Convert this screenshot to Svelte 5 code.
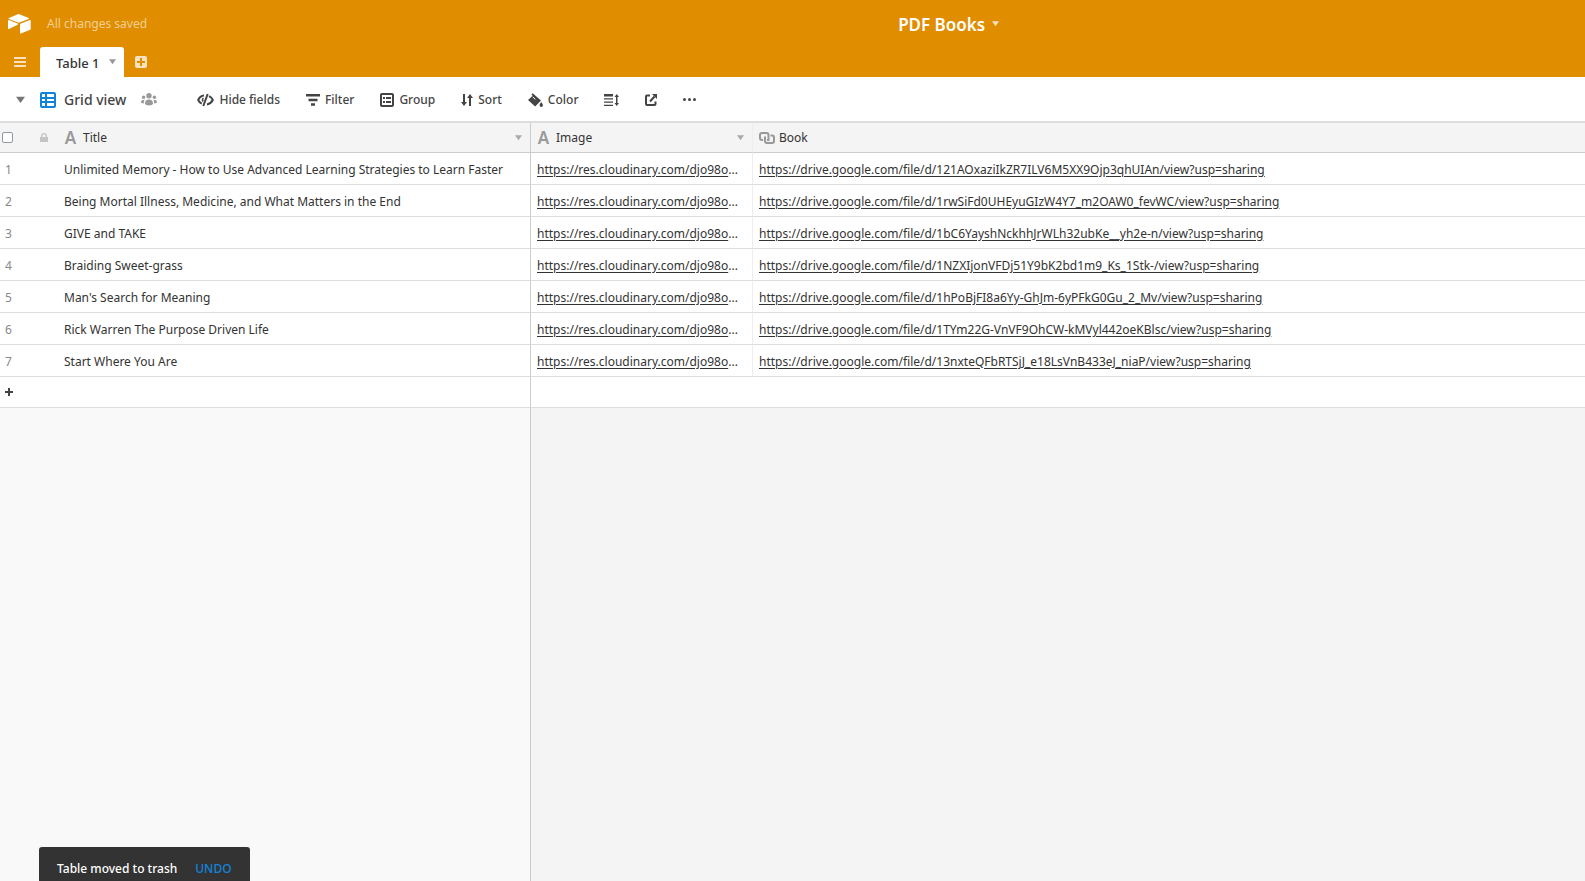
<script lang="ts">
	const books = [
		{ title: 'Unlimited Memory - How to Use Advanced Learning Strategies to Learn Faster', image: 'https://res.cloudinary.com/djo98o', book: 'https://drive.google.com/file/d/121AOxaziIkZR7ILV6M5XX9Ojp3qhUIAn/view?usp=sharing' },
		{ title: 'Being Mortal Illness, Medicine, and What Matters in the End', image: 'https://res.cloudinary.com/djo98o', book: 'https://drive.google.com/file/d/1rwSiFd0UHEyuGIzW4Y7_m2OAW0_fevWC/view?usp=sharing' },
		{ title: 'GIVE and TAKE', image: 'https://res.cloudinary.com/djo98o', book: 'https://drive.google.com/file/d/1bC6YayshNckhhJrWLh32ubKe__yh2e-n/view?usp=sharing' },
		{ title: 'Braiding Sweet-grass', image: 'https://res.cloudinary.com/djo98o', book: 'https://drive.google.com/file/d/1NZXIjonVFDj51Y9bK2bd1m9_Ks_1Stk-/view?usp=sharing' },
		{ title: "Man's Search for Meaning", image: 'https://res.cloudinary.com/djo98o', book: 'https://drive.google.com/file/d/1hPoBjFI8a6Yy-GhJm-6yPFkG0Gu_2_Mv/view?usp=sharing' },
		{ title: 'Rick Warren The Purpose Driven Life', image: 'https://res.cloudinary.com/djo98o', book: 'https://drive.google.com/file/d/1TYm22G-VnVF9OhCW-kMVyl442oeKBlsc/view?usp=sharing' },
		{ title: 'Start Where You Are', image: 'https://res.cloudinary.com/djo98o', book: 'https://drive.google.com/file/d/13nxteQFbRTSjJ_e18LsVnB433eJ_niaP/view?usp=sharing' }
	];
</script>

{#snippet caret(size: number)}
	<svg class="caret" width={size} height={size} viewBox="0 0 8 8" fill="currentColor" aria-hidden="true"><path d="M0 1.5h8L4 7z"/></svg>
{/snippet}

<div class="app">
	<header class="banner">
		<div class="topbar">
			<div class="topbar-left">
				<a href="#home" class="logo" aria-label="Home">
					<svg width="24" height="22" viewBox="0 0 24 22" fill="#fff"><path d="M11 1.2a2 2 0 0 1 1.4 0l9.2 3.7c.5.2.5.8 0 1L12.500 9.500a2 2 0 0 1-1.500 0L1.900 5.900c-.5-.2-.5-.8 0-1z"/><path d="M13 11.400v8.700c0 .4.4.7.8.500l9.500-3.800c.2-.1.400-.3.400-.500V7.600c0-.4-.4-.700-.8-.500l-9.500 3.700c-.2.1-.4.3-.4.600z"/><path d="M10.600 11.700 2 15.900c-.5.300-1 0-1-.500V7.700c0-.5.400-.8.900-.6l8.700 3.500c.6.200.6.800 0 1.100z"/></svg>
				</a>
				<span class="saved">All changes saved</span>
			</div>
			<button class="base-name">PDF Books {@render caret(7)}</button>
		</div>
		<nav class="tabs">
			<button class="menu" aria-label="Menu">
				<svg width="12" height="10" viewBox="0 0 12 10" fill="currentColor"><path d="M0 0h12v2H0zM0 4h12v2H0zM0 8h12v2H0z"/></svg>
			</button>
			<button class="tab">Table 1 {@render caret(7)}</button>
			<button class="add-table" aria-label="Add table">
				<svg width="12" height="12" viewBox="0 0 12 12"><rect width="12" height="12" rx="2" fill="currentColor"/><path d="M6 2v8M2 6h8" stroke="#e08d00" stroke-width="2"/></svg>
			</button>
		</nav>
	</header>

	<div class="toolbar">
		<button class="views" aria-label="Toggle views">{@render caret(9)}</button>
		<button class="view">
			<svg width="16" height="16" viewBox="0 0 16 16"><rect width="16" height="16" rx="2" fill="#1283da"/><path d="M2 2h3v3H2zM7 2h7v3H7zM2 7h3v2H2zM7 7h7v2H7zM2 11h3v3H2zM7 11h7v3H7z" fill="#fff"/></svg>
			<span>Grid view</span>
			<svg class="people" width="16" height="13" viewBox="0 0 16 13" fill="#999"><circle cx="8" cy="2.700" r="2.700"/><circle cx="2.600" cy="4.200" r="1.700"/><circle cx="13.400" cy="4.200" r="1.700"/><path d="M4 10.500C4 7.800 5.500 6.600 8 6.600s4 1.200 4 3.900c0 1.300-1.800 2-4 2s-4-.7-4-2zM0 9.300C0 7.600 1 6.800 3.700 6.800 3 7.800 2.800 9 2.800 10.500 1 10.500 0 10 0 9.300zM16 9.300c0-1.700-1-2.500-3.700-2.500.7 1 .9 2.200.9 3.700 1.800 0 2.800-.5 2.800-1.200z"/></svg>
		</button>
		<button class="tool">
			<svg width="17" height="14" viewBox="0 0 17 14" fill="none" stroke="currentColor" stroke-width="2"><path d="M7 2.500C4 2.800 2.200 4.700 1.200 7c.8 1.700 2 2.900 3.600 3.700M12 3.200c1.700.8 3 2.100 3.800 3.800-1 2.200-2.800 3.800-5.800 4.400M10.700 1 6.300 13"/><path d="M6.300 5a3 3 0 0 0-.3 3.500" stroke-width="1.500"/></svg>
			Hide fields
		</button>
		<button class="tool">
			<svg width="14" height="12" viewBox="0 0 14 12" fill="currentColor"><path d="M0 0h14v2.500H0zM2.500 4.800h9v2.400h-9zM5 9.300h4v2.400H5z"/></svg>
			Filter
		</button>
		<button class="tool">
			<svg width="14" height="14" viewBox="0 0 14 14"><rect x="1" y="1" width="12" height="12" rx="1" fill="none" stroke="currentColor" stroke-width="2"/><path d="M3 4h2v2H3zM6 4h5v2H6zM3 8h2v2H3zM6 8h5v2H6z" fill="currentColor"/></svg>
			Group
		</button>
		<button class="tool">
			<svg width="12" height="12" viewBox="0 0 12 12" fill="currentColor"><path d="M2 0h2v8h2l-3 4-3-4h2zM8 12h2V4h2L9 0 6 4h2z"/></svg>
			Sort
		</button>
		<button class="tool">
			<svg width="15" height="14" viewBox="0 0 15 14" fill="currentColor"><path d="M3.400 1.500 4.700.2l8.300 7.300-5.800 6L0 7l4.600-4.300z"/><path d="M4.700 3.900 7.300 6.300" stroke="#fff"/><path d="M13.200 9c1 1.500 1.700 2.300 1.700 3.300a1.600 1.600 0 0 1-3.300 0c0-1 .7-1.800 1.600-3.300z"/></svg>
			Color
		</button>
		<button class="tool" aria-label="Row height">
			<svg width="15" height="12" viewBox="0 0 15 12" fill="currentColor"><path d="M0 0h9v2.600H0zM0 4.300h9v1.300H0zM0 7.500h9v1.300H0zM0 10.700h9V12H0zM12 2h1.500v8H12z"/><path d="M10.500 3 12.750 0 15 3zM10.500 9h4.500l-2.250 3z"/></svg>
		</button>
		<button class="tool" aria-label="Share view">
			<svg width="12" height="12" viewBox="0 0 12 12" fill="none" stroke="currentColor" stroke-width="2"><path d="M5 1.500H2a1 1 0 0 0-1 1V10a1 1 0 0 0 1 1h7.500a1 1 0 0 0 1-1V7.500M5 7.500l4.500-5"/><path d="M7 0h5v5z" fill="currentColor" stroke="none"/></svg>
		</button>
		<button class="tool" aria-label="More">
			<svg width="13" height="3" viewBox="0 0 13 3" fill="currentColor"><circle cx="1.500" cy="1.500" r="1.500"/><circle cx="6.500" cy="1.500" r="1.500"/><circle cx="11.500" cy="1.500" r="1.500"/></svg>
		</button>
	</div>

	<table>
		<colgroup>
			<col class="col-num" />
			<col class="col-title" />
			<col class="col-image" />
			<col />
		</colgroup>
		<thead>
			<tr>
				<th>
					<div class="head-num">
						<input type="checkbox" aria-label="Select all rows" />
						<svg width="8" height="9" viewBox="0 0 8 9" fill="#c4c4c4"><path d="M0 4h8v5H0z"/><path d="M1.700 4.500V3a2.300 2.300 0 0 1 4.600 0v1.500" fill="none" stroke="#c4c4c4" stroke-width="1.300"/></svg>
					</div>
				</th>
				<th class="frozen">
					<div class="head"><span class="type" aria-hidden="true">A</span>Title{@render caret(7)}</div>
				</th>
				<th class="divided">
					<div class="head"><span class="type" aria-hidden="true">A</span>Image{@render caret(7)}</div>
				</th>
				<th>
					<div class="head link-head">
						<svg width="16" height="12" viewBox="0 0 16 12" fill="none" stroke="#999" stroke-width="2"><path d="M4 8H3a2 2 0 0 1-2-2V3a2 2 0 0 1 2-2h4.500a2 2 0 0 1 2 2v5H8"/><path d="M11.500 3.500H13a2 2 0 0 1 2 2V9a2 2 0 0 1-2 2H8a2 2 0 0 1-2-2V4.500"/></svg>
						Book
					</div>
				</th>
			</tr>
		</thead>
		<tbody>
			{#each books as row, i}
				<tr>
					<td class="num">{i + 1}</td>
					<td class="frozen">{row.title}</td>
					<td class="divided"><a href={row.image}>{row.image}</a>...</td>
					<td><a href={row.book}>{row.book}</a></td>
				</tr>
			{/each}
			<tr class="add-row">
				<td class="num">
					<button aria-label="Add row">
						<svg width="8" height="8" viewBox="0 0 8 8"><path d="M4 0v8M0 4h8" stroke="#444" stroke-width="2"/></svg>
					</button>
				</td>
				<td class="frozen"></td>
				<td></td>
				<td></td>
			</tr>
		</tbody>
	</table>
	<div class="rest"><div class="rest-left"></div></div>

	<div class="toast" role="status">
		<span>Table moved to trash</span>
		<button>UNDO</button>
	</div>
</div>

<style>
	:global(body) {
		margin: 0;
	}
	.app {
		display: flex;
		flex-direction: column;
		min-height: 100vh;
		overflow: hidden;
		background: #f4f4f4;
		color: #333;
		font-family: "Noto Sans", "Open Sans", sans-serif;
		font-size: 12px;
		line-height: 18px;
	}
	button {
		display: flex;
		align-items: center;
		padding: 0;
		border: 0;
		background: none;
		color: inherit;
		font: inherit;
		white-space: nowrap;
		cursor: pointer;
	}
	svg {
		display: block;
		flex: none;
	}
	.banner {
		background: #e08d00;
		color: #fff;
	}
	.topbar {
		display: grid;
		grid-template-columns: 17fr 13fr;
		align-items: center;
		height: 47px;
	}
	.topbar-left {
		display: flex;
		align-items: center;
		gap: 16px;
		padding-left: 7px;
	}
	.saved {
		color: #f3cf92;
	}
	.base-name {
		gap: 7px;
		padding-top: 2px;
		font-size: 17px;
		font-weight: 600;
		line-height: 24px;
	}
	.base-name .caret {
		margin-bottom: 2px;
		color: #f9e3bf;
	}
	.tabs {
		display: flex;
		height: 30px;
	}
	.menu {
		width: 40px;
		justify-content: center;
		color: #f9e3bf;
	}
	.tab {
		gap: 9px;
		padding: 2px 8px 0 16px;
		border-radius: 3px 3px 0 0;
		background: #fff;
		color: #333;
		font-size: 13px;
		font-weight: 500;
	}
	.tab .caret {
		color: #999;
		margin-bottom: 4px;
	}
	.add-table {
		margin-left: 11px;
		color: #f9e3bf;
	}
	.toolbar {
		display: flex;
		align-items: center;
		gap: 26px;
		height: 43px;
		padding-top: 1px;
		border-bottom: 2px solid #ddd;
		background: #fff;
		color: #444;
		font-weight: 500;
	}
	.views {
		width: 40px;
		margin-right: -26px;
		justify-content: center;
		color: #777;
	}
	.view {
		gap: 8px;
		margin-right: 14px;
		font-size: 14px;
	}
	.people {
		margin-left: 7px;
	}
	.tool {
		gap: 5px;
	}
	table {
		width: 100%;
		table-layout: fixed;
		border-collapse: separate;
		border-spacing: 0;
		background: #fff;
	}
	.col-num {
		width: 58px;
	}
	.col-title {
		width: 473px;
	}
	.col-image {
		width: 222px;
	}
	th,
	td {
		box-sizing: border-box;
		height: 32px;
		padding: 0 6px;
		border-bottom: 1px solid #ddd;
		text-align: left;
		font-weight: 400;
		white-space: nowrap;
		overflow: hidden;
	}
	td {
		padding-top: 2px;
	}
	th {
		height: 30px;
		border-bottom-color: #ccc;
		background: #f4f4f4;
	}
	th:first-child {
		padding: 0 2px;
	}
	.frozen {
		border-right: 1px solid #ccc;
	}
	.divided {
		border-right: 1px solid #eee;
	}
	td a {
		color: inherit;
		text-underline-offset: 2px;
	}
	.num {
		padding-left: 5px;
		color: #888;
	}
	.head-num {
		display: flex;
		align-items: center;
		gap: 27px;
	}
	.head-num input {
		appearance: none;
		width: 11px;
		height: 11px;
		margin: 0;
		border: 1px solid #90999f;
		border-radius: 2px;
		background: #fff;
	}
	.head {
		display: flex;
		align-items: center;
		gap: 6px;
		padding-right: 2px;
	}
	.head .caret {
		margin-left: auto;
		color: #aaa;
	}
	.link-head {
		gap: 4px;
	}
	.type {
		width: 13px;
		color: #999;
		font-size: 17px;
		font-weight: 600;
		text-align: center;
	}
	.add-row td {
		height: 31px;
		padding-top: 0;
	}
	.rest {
		display: flex;
		flex: 1;
	}
	.rest-left {
		width: 530px;
		border-right: 1px solid #ccc;
		background: #f9f9f9;
	}
	.toast {
		position: fixed;
		bottom: 0;
		left: 39px;
		display: flex;
		gap: 18px;
		padding: 13px 18px 3px;
		border-radius: 3px 3px 0 0;
		background: #333;
		color: #fff;
		font-weight: 500;
	}
	.toast button {
		color: #1283da;
	}
</style>
